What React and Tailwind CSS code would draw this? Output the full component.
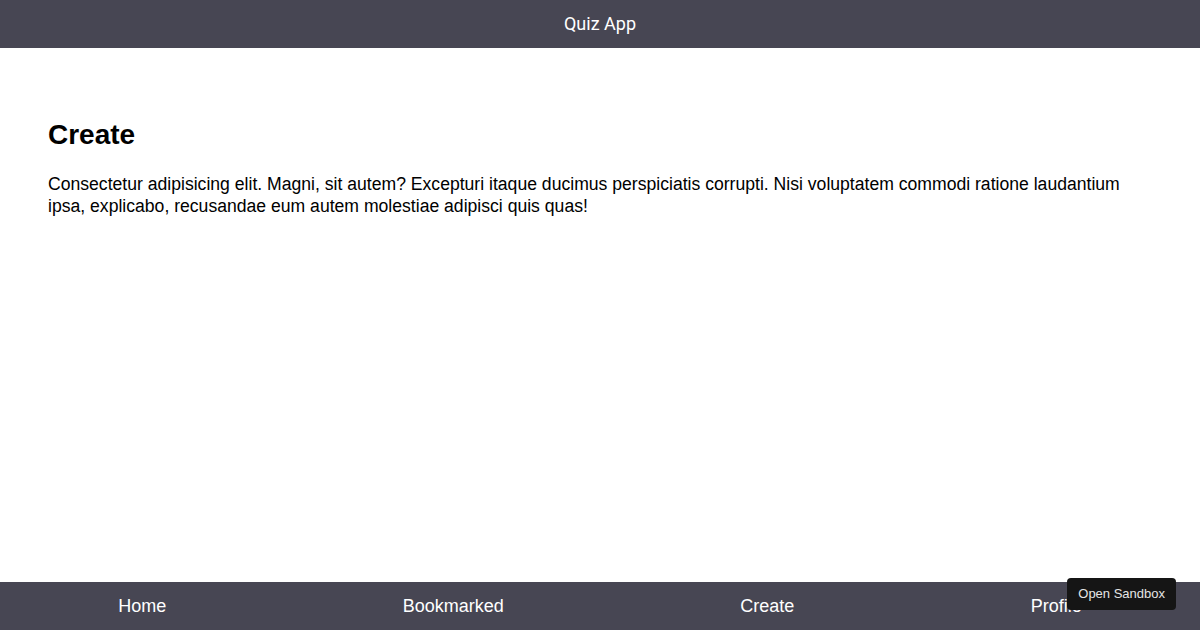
export default function App() {
  return (
    <div className="relative flex h-[630px] w-[1200px] flex-col bg-white font-['Liberation_Sans',Arial,sans-serif]">
      <header className="flex h-12 items-center justify-center bg-[#474653] pb-[2px]">
        <span className="font-['Roboto',sans-serif] text-[18px] text-white">Quiz App</span>
      </header>
      <main className="flex-1 px-12 pt-[70px] text-black">
        <h1 className="text-[28px] font-bold leading-[34px]">Create</h1>
        <p className="mt-[21px] text-[17.6px] leading-[22px]">
          Consectetur adipisicing elit. Magni, sit autem? Excepturi itaque ducimus perspiciatis corrupti. Nisi voluptatem commodi ratione laudantium ipsa, explicabo, recusandae eum autem molestiae adipisci quis quas!
        </p>
      </main>
      <nav className="flex h-12 items-center justify-around bg-[#474653] text-[18px] text-white">
        <span>Home</span>
        <span>Bookmarked</span>
        <span>Create</span>
        <span>Profile</span>
      </nav>
      <div className="absolute right-6 bottom-5 flex h-8 items-center rounded bg-[#151515] px-[11px] text-[13px] text-[#e5e5e5]">
        Open Sandbox
      </div>
    </div>
  );
}
